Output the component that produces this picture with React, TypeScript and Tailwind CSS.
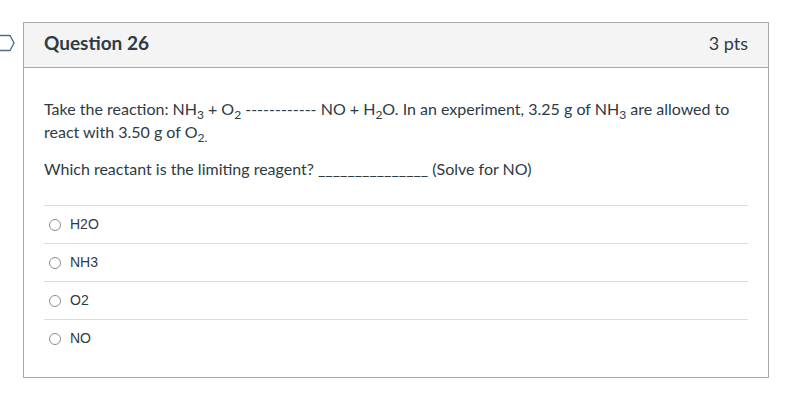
const answers = ['H2O', 'NH3', 'O2', 'NO'];

function Marker() {
  return (
    <svg className="absolute left-0 top-[34px]" width="16" height="18" viewBox="0 0 16 18">
      <path d="M-2 1.5 H10 L14 9 L10 16.5 H-2" fill="none" stroke="#4b6b8c" strokeWidth="1.3" />
    </svg>
  );
}

function Sub({ children }: { children: string }) {
  return <span className="relative top-[4px] text-[12px] leading-none">{children}</span>;
}

function Answer({ label }: { label: string }) {
  return (
    <div className="flex h-[38px] items-center border-t border-[#dcdcdc] pl-[5px]">
      <span className="h-[12px] w-[12px] rounded-full border border-[#8d8d8d] bg-white" />
      <span className="ml-[9px] font-['Liberation_Sans',Arial,sans-serif] text-[14px] text-[#2d3b45]">{label}</span>
    </div>
  );
}

export default function App() {
  return (
    <div className="relative min-h-[405px] w-[803px] bg-white pl-[23px] pt-[22px] font-['Lato',sans-serif] text-[#2d3b45]">
      <Marker />
      <div className="w-[746px] border border-[#a9a9a9]">
        <div className="flex h-[45px] items-center justify-between border-b border-[#a9a9a9] bg-[#f4f4f4] px-[20px] pb-[3px]">
          <span className="text-[19px] font-bold">Question 26</span>
          <span className="text-[18px]">3 pts</span>
        </div>
        <div className="px-[20px] pb-[20px] pt-[29px]">
          <p className="text-[16px] leading-[23px]">
            Take the reaction: NH<Sub>3</Sub> + O<Sub>2</Sub> ------------ NO + H<Sub>2</Sub>O. In an experiment,
            3.25 g of NH<Sub>3</Sub> are allowed to react with 3.50 g of O<Sub>2.</Sub>
          </p>
          <p className="mt-[14px] text-[16px] leading-[23px]">
            Which reactant is the limiting reagent? _______________ (Solve for NO)
          </p>
          <div className="mt-[25px]">
            {answers.map((a) => (
              <Answer key={a} label={a} />
            ))}
          </div>
        </div>
      </div>
    </div>
  );
}
